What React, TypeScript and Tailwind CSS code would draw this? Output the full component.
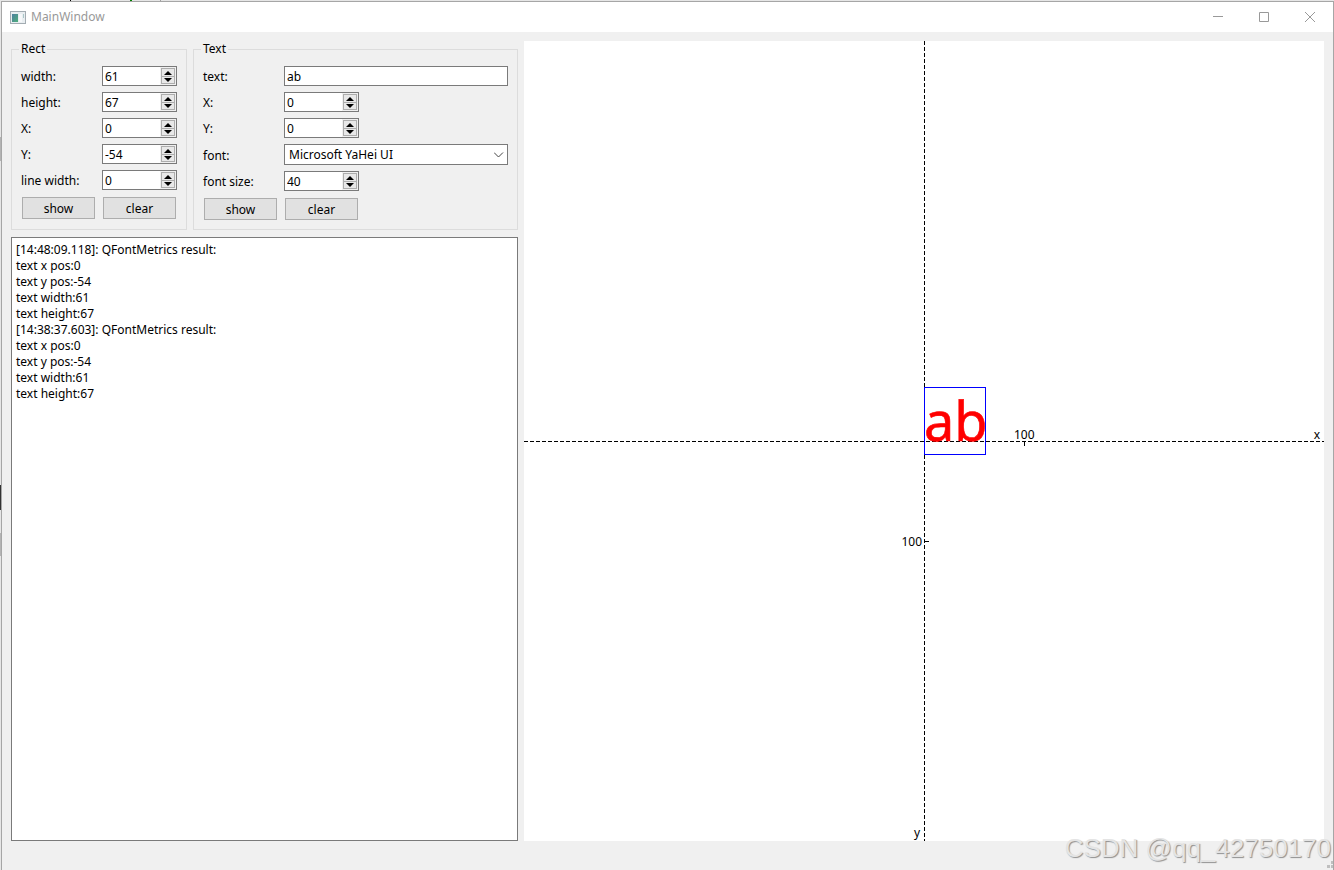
import React from 'react';

const LOG = [
  '[14:48:09.118]: QFontMetrics result:',
  'text x pos:0',
  'text y pos:-54',
  'text width:61',
  'text height:67',
  '[14:38:37.603]: QFontMetrics result:',
  'text x pos:0',
  'text y pos:-54',
  'text width:61',
  'text height:67',
].join('\n');

const GroupBox: React.FC<{ title: string; className: string; children: React.ReactNode }> = ({ title, className, children }) => (
  <fieldset className={`min-w-0 border border-[#dcdcdc] ${className}`}>
    <legend className="ml-[7px] px-[2px] leading-4">{title}</legend>
    <div className="flex flex-col gap-[6px] px-[9px] pt-[9px] pb-2">{children}</div>
  </fieldset>
);

const Row: React.FC<{ id: string; label: string; children: React.ReactNode }> = ({ id, label, children }) => (
  <div className="flex items-center gap-[6px]">
    <label htmlFor={id} className="w-[75px] shrink-0 pt-[2px] whitespace-nowrap">{label}</label>
    {children}
  </div>
);

const SpinBox: React.FC<{ id: string; value: number }> = ({ id, value }) => (
  <div className="flex h-5 w-[75px] border border-[#7a7a7a] bg-white">
    <input
      id={id}
      type="number"
      defaultValue={value}
      className="w-0 min-w-0 flex-1 bg-transparent pt-[2px] pl-[2px] outline-none [appearance:textfield] [&::-webkit-inner-spin-button]:appearance-none"
    />
    <div className="flex flex-col bg-[#f0f0f0] p-px">
      <button type="button" aria-label="Increase" className="flex h-2 w-[14px] items-center justify-center border border-b-0 border-[#adadad] bg-[#e8e8e8]">
        <svg width="8" height="4" viewBox="0 0 8 4"><path d="M4 0L8 4H0z" /></svg>
      </button>
      <button type="button" aria-label="Decrease" className="flex h-2 w-[14px] items-center justify-center border border-[#adadad] bg-[#e8e8e8]">
        <svg width="8" height="4" viewBox="0 0 8 4"><path d="M0 0H8L4 4z" /></svg>
      </button>
    </div>
  </div>
);

const Buttons: React.FC = () => (
  <div className="flex gap-2 p-px">
    <button type="button" className="h-[22px] w-[73px] border border-[#adadad] bg-[#e1e1e1] pt-[2px]">show</button>
    <button type="button" className="h-[22px] w-[73px] border border-[#adadad] bg-[#e1e1e1] pt-[2px]">clear</button>
  </div>
);

const TitleBar: React.FC = () => (
  <header className="flex h-[30px] shrink-0 items-center bg-white pl-2 text-[#999999]">
    <svg width="16" height="13" viewBox="0 0 16 13" className="shrink-0">
      <defs>
        <linearGradient id="pane" x1="0" y1="0" x2="1" y2="1">
          <stop offset="0" stopColor="#4d7fa0" />
          <stop offset="1" stopColor="#4fae7b" />
        </linearGradient>
      </defs>
      <path d="M0 0H16V13H0z" fill="#a3acb2" />
      <path d="M1 1H15V12H1z" fill="#e9eef1" />
      <path d="M2 3H8V11H2z" fill="url(#pane)" />
      <path d="M9 3H12V11H9z" fill="#f6f8fa" />
      <path d="M13 3H14V7H13z" fill="#a9c6c8" />
    </svg>
    <h1 className="ml-[5px] flex-1">MainWindow</h1>
    <button type="button" aria-label="Minimize" className="flex h-full w-[46px] items-center justify-center">
      <svg width="10" height="10" viewBox="0 0 10 10" stroke="currentColor"><path d="M0 4.5H10" /></svg>
    </button>
    <button type="button" aria-label="Maximize" className="flex h-full w-[46px] items-center justify-center">
      <svg width="10" height="10" viewBox="0 0 10 10" fill="none" stroke="currentColor"><path d="M.5 .5H9.5V9.5H.5z" /></svg>
    </button>
    <button type="button" aria-label="Close" className="flex h-full w-[46px] items-center justify-center">
      <svg width="10" height="10" viewBox="0 0 10 10" stroke="currentColor"><path d="M0 0L10 10M10 0L0 10" /></svg>
    </button>
  </header>
);

// Origin sits in the middle of the view, y grows downwards
const Plot: React.FC = () => (
  <svg className="min-w-0 flex-1 bg-white" role="img" aria-label="Text bounding rectangle">
    <svg y="50%" overflow="visible">
      <line x1="0" y1="0.5" x2="100%" y2="0.5" stroke="#000" strokeDasharray="4 2" />
    </svg>
    <svg x="50%" overflow="visible">
      <line x1="0.5" y1="0" x2="0.5" y2="100%" stroke="#000" strokeDasharray="4 2" />
    </svg>
    <svg x="50%" y="50%" overflow="visible">
      <path d="M100.5 0V5M0 100.5H5" stroke="#000" />
      <text x="90" y="-2">100</text>
      <text x="-2" y="105" textAnchor="end">100</text>
      <text x="0" y="0" fontSize="54" fill="#ff0000" stroke="#ff0000" strokeWidth="0.6">ab</text>
      <rect x="0.5" y="-53.5" width="61" height="67" fill="none" stroke="#0000ff" />
    </svg>
    <svg x="100%" y="50%" overflow="visible">
      <text x="-4" y="-2" textAnchor="end">x</text>
    </svg>
    <svg x="50%" y="100%" overflow="visible">
      <text x="-4" y="-4" textAnchor="end">y</text>
    </svg>
  </svg>
);

export default function App() {
  return (
    <div className="flex h-screen flex-col bg-[#e6e6e6] font-['Noto_Sans','Open_Sans',sans-serif] text-[12px] leading-4 text-black">
      <div className="flex h-px shrink-0">
        <div className="ml-[70px] w-px bg-black" />
        <div className="ml-[59px] w-[2px] bg-[#008000]" />
        <div className="ml-[28px] w-px bg-[#a0a0a0]" />
      </div>
      <div className="flex min-h-0 flex-1">
        <div className="flex w-px shrink-0 flex-col">
          <div className="mt-[136px] h-6 bg-[#b4b4b4]" />
          <div className="mt-[324px] h-[25px] bg-[#333333]" />
          <div className="mt-[23px] h-[23px] bg-[#b4b4b4]" />
        </div>
        <div className="relative flex min-w-0 flex-1 flex-col border border-b-0 border-[#a6a6a6] bg-[#f0f0f0]">
          <TitleBar />
          <main className="flex min-h-0 flex-1 gap-[6px] px-[9px] pt-[9px]">
            <div className="flex w-[507px] shrink-0 flex-col gap-[7px]">
              <div className="flex gap-[6px]">
                <GroupBox title="Rect" className="w-[176px]">
                  <Row id="rect-width" label="width:"><SpinBox id="rect-width" value={61} /></Row>
                  <Row id="rect-height" label="height:"><SpinBox id="rect-height" value={67} /></Row>
                  <Row id="rect-x" label="X:"><SpinBox id="rect-x" value={0} /></Row>
                  <Row id="rect-y" label="Y:"><SpinBox id="rect-y" value={-54} /></Row>
                  <Row id="line-width" label="line width:"><SpinBox id="line-width" value={0} /></Row>
                  <Buttons />
                </GroupBox>
                <GroupBox title="Text" className="flex-1">
                  <Row id="text" label="text:">
                    <input id="text" type="text" defaultValue="ab" className="h-5 min-w-0 flex-1 border border-[#7a7a7a] bg-white pl-[2px] outline-none" />
                  </Row>
                  <Row id="text-x" label="X:"><SpinBox id="text-x" value={0} /></Row>
                  <Row id="text-y" label="Y:"><SpinBox id="text-y" value={0} /></Row>
                  <Row id="font" label="font:">
                    <div className="relative min-w-0 flex-1">
                      <select id="font" className="block h-[21px] w-full appearance-none border border-[#7a7a7a] bg-white pl-1 outline-none">
                        <option>Microsoft YaHei UI</option>
                      </select>
                      <svg className="pointer-events-none absolute top-2 right-1" width="10" height="6" viewBox="0 0 10 6" fill="none" stroke="#444">
                        <path d="M0 .5L4.500 5L9 .5" />
                      </svg>
                    </div>
                  </Row>
                  <Row id="font-size" label="font size:"><SpinBox id="font-size" value={40} /></Row>
                  <Buttons />
                </GroupBox>
              </div>
              <textarea
                readOnly
                aria-label="Log"
                defaultValue={LOG}
                className="min-h-0 w-full flex-1 resize-none border border-[#7a7a7a] bg-white p-1 outline-none"
              />
            </div>
            <Plot />
          </main>
          <footer className="flex h-[29px] shrink-0 items-end justify-end">
            <svg width="6" height="9" viewBox="0 0 6 9" fill="#bfbfbf"><path d="M0 4H3V7H0zM4 0H6V3H4zM4 4H6V7H4z" /></svg>
          </footer>
          <div className="pointer-events-none absolute right-[2px] bottom-[6px] font-['Liberation_Sans',sans-serif] text-[26px] leading-8 text-[#e4e4e4] [text-shadow:1px_1px_1px_#909090]">
            CSDN @qq_42750170
          </div>
        </div>
      </div>
    </div>
  );
}
